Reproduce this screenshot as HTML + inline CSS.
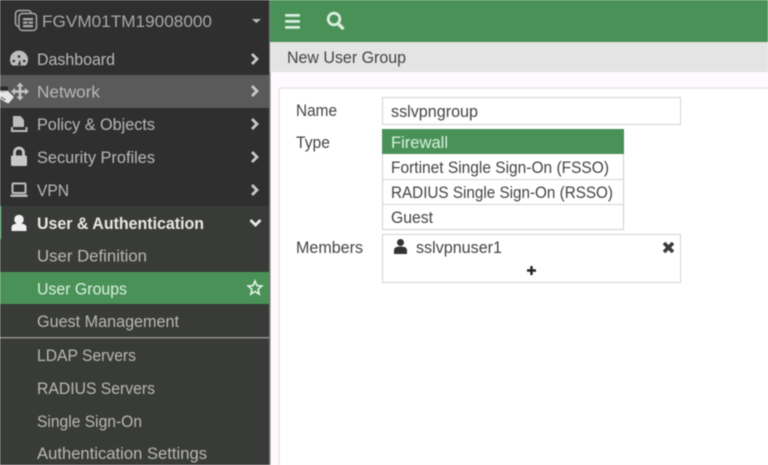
<!DOCTYPE html>
<html><head><meta charset="utf-8"><style>
html,body{margin:0;padding:0;width:768px;height:465px;overflow:hidden;background:#fdf9fd}
svg{display:block;filter:blur(.5px)}
text{font-family:"Liberation Sans",sans-serif;font-size:16.5px}
.s{fill:#b8b8b6}.d{fill:#444}
</style></head><body>
<svg width="768" height="465" viewBox="0 0 768 465" xmlns="http://www.w3.org/2000/svg">
<rect width="768" height="465" fill="#fdf9fd"/>
<!-- sidebar -->
<rect width="270" height="206" fill="#2f2f2f"/>
<rect y="206" width="270" height="259" fill="#393b39"/>
<rect y="75" width="269" height="33" fill="#5a5a5a"/>
<rect y="272" width="269" height="32" fill="#4a9158"/>
<rect y="337" width="269" height="1.5" fill="#8d8d8b"/>
<rect y="206" width="1.5" height="33" fill="#4a9158"/>
<rect x="269" width="1.5" height="465" fill="#777"/>
<!-- header -->
<rect x="270" width="498" height="42" fill="#4a9158"/>
<rect x="270" y="42" width="498" height="30" fill="#e4e4e4"/>
<!-- header icons -->
<g fill="#d8eedd"><rect x="285" y="14" width="15" height="2.8" rx="1"/><rect x="285" y="20" width="15" height="2.8" rx="1"/><rect x="285" y="26" width="15" height="2.8" rx="1"/></g>
<circle cx="334" cy="19" r="5.8" fill="none" stroke="#d8eedd" stroke-width="2.8"/>
<path d="M338 23.500l4.500 4.500" stroke="#d8eedd" stroke-width="3.400" stroke-linecap="round"/>
<!-- device -->
<g fill="none" stroke="#a8a8a8" stroke-width="1.500">
<rect x="15.500" y="10.500" width="16" height="16" rx="3.500"/>
<rect x="19" y="13.500" width="17.500" height="17" rx="3.500" fill="#2f2f2f"/>
</g>
<path d="M23 18h10v2.200h-10zM23 21.500h4.500v2.200h-4.500zM28.500 21.500h4.500v2.200h-4.500zM23 25h10v2.200h-10z" fill="#a8a8a8"/>
<text x="42" y="27" textLength="170" lengthAdjust="spacingAndGlyphs" style="fill:#a8a8a6">FGVM01TM19008000</text>
<path d="M252 19h9l-4.500 4z" fill="#bbb"/>
<!-- sidebar labels -->
<text x="37" y="65" textLength="78" lengthAdjust="spacingAndGlyphs" class="s">Dashboard</text>
<text x="37" y="97.500" textLength="63" lengthAdjust="spacingAndGlyphs" class="s">Network</text>
<text x="37" y="130" textLength="118" lengthAdjust="spacingAndGlyphs" class="s">Policy &amp; Objects</text>
<text x="37" y="163" textLength="118" lengthAdjust="spacingAndGlyphs" class="s">Security Profiles</text>
<text x="37" y="196" textLength="32" lengthAdjust="spacingAndGlyphs" class="s">VPN</text>
<text x="37" y="229" textLength="167" lengthAdjust="spacingAndGlyphs" style="fill:#e8e8e6;font-weight:bold">User &amp; Authentication</text>
<text x="37" y="261.500" textLength="110" lengthAdjust="spacingAndGlyphs" class="s">User Definition</text>
<text x="37" y="294.500" textLength="90" lengthAdjust="spacingAndGlyphs" style="fill:#d8f0dd">User Groups</text>
<text x="37" y="327" textLength="142" lengthAdjust="spacingAndGlyphs" class="s">Guest Management</text>
<text x="37" y="361" textLength="99" lengthAdjust="spacingAndGlyphs" class="s">LDAP Servers</text>
<text x="37" y="394" textLength="118" lengthAdjust="spacingAndGlyphs" class="s">RADIUS Servers</text>
<text x="37" y="427" textLength="105" lengthAdjust="spacingAndGlyphs" class="s">Single Sign-On</text>
<text x="37" y="459" textLength="170" lengthAdjust="spacingAndGlyphs" class="s">Authentication Settings</text>
<!-- chevrons -->
<g fill="none" stroke="#c8c8c6" stroke-width="2.800">
<path d="M252 54l5 5-5 5M252 86l5 5-5 5M252 119l5 5-5 5M252 152l5 5-5 5M252 185l5 5-5 5"/>
<path d="M250.500 220l5 5 5-5" stroke="#e8e8e6"/>
</g>
<!-- sidebar icons -->
<path d="M12.200 65.500A9 9 0 1 1 25.800 65.500z" fill="#bdbdbd"/>
<g fill="#2f2f2f"><circle cx="13.800" cy="61" r="1.300"/><circle cx="24.200" cy="61" r="1.300"/><circle cx="19" cy="56.500" r="1.300"/><path d="M17.800 65l2.200-5.500 .9 5.500z"/></g>
<path d="M13 91.500h14M20 84.500v14" stroke="#c4c4c2" stroke-width="2.600"/>
<path d="M20 82.500l3.600 4h-7.200zM20 100.500l3.600-4h-7.200zM11 91.500l4-3.600v7.200zM29 91.500l-4-3.600v7.200z" fill="#c4c4c2"/>
<path d="M0 92h5l3-1 6 6-5.500 6.500-3.500-1.500-5-3.500z" fill="#e6e6e6"/>
<path d="M0 86.500h8v4.500h-8z" fill="#2a2a2a"/><path d="M0 91.200h8" stroke="#ddd"/>
<path d="M1 97l4.500 3" stroke="#666" stroke-width="1.200"/>
<path d="M13 116h7.500l3.500 4v7h-11z" fill="#bdbdbd"/>
<path d="M12 127v4h14.500v-4" fill="none" stroke="#bdbdbd" stroke-width="2"/>
<path d="M14.500 156v-3.500a4.500 4.500 0 0 1 9 0v3.500" fill="none" stroke="#c8c8c6" stroke-width="2.800"/>
<rect x="11" y="155.500" width="16" height="10.500" rx="1.500" fill="#c8c8c6"/>
<rect x="12.500" y="183.500" width="13" height="9.500" rx="1" fill="none" stroke="#bdbdbd" stroke-width="2"/>
<rect x="10.500" y="194.500" width="17" height="2.400" fill="#bdbdbd"/>
<circle cx="19" cy="219.500" r="4.800" fill="#f0f0f0"/>
<path d="M11.500 231v-3.500c0-3 3-4 7.500-4s7.500 1 7.500 4v3.500z" fill="#f0f0f0"/>
<path d="M255 281l1.900 4.600 4.900.4-3.700 3.200 1.100 4.800-4.200-2.600-4.200 2.600 1.100-4.800-3.700-3.200 4.900-.4z" fill="none" stroke="#e4f2e7" stroke-width="1.600"/>
<!-- title -->
<text x="287" y="63" textLength="119" lengthAdjust="spacingAndGlyphs" class="d">New User Group</text>
<!-- card -->
<rect x="279" y="88" width="489" height="377" fill="#fff"/>
<path d="M279 465V90q0-2 2-2H768" fill="none" stroke="#e8e4e8" stroke-width="1.500"/>
<text x="296" y="116" textLength="41" lengthAdjust="spacingAndGlyphs" class="d">Name</text>
<text x="296" y="148" textLength="34" lengthAdjust="spacingAndGlyphs" class="d">Type</text>
<text x="296" y="253" textLength="67" lengthAdjust="spacingAndGlyphs" class="d">Members</text>
<rect x="382.500" y="97.500" width="298" height="27" fill="#fff" stroke="#d2d2d2"/>
<text x="391" y="117" textLength="87" lengthAdjust="spacingAndGlyphs" class="d">sslvpngroup</text>
<rect x="382.500" y="129.500" width="241" height="100" fill="#fff" stroke="#cfcfcf"/>
<rect x="382" y="129" width="242" height="25" fill="#4a9158"/>
<path d="M382 179.500h242M382 204.500h242" stroke="#d6d6d6"/>
<text x="391" y="148" textLength="57" lengthAdjust="spacingAndGlyphs" style="fill:#d8f0dd">Firewall</text>
<text x="391" y="173" textLength="218" lengthAdjust="spacingAndGlyphs" class="d">Fortinet Single Sign-On (FSSO)</text>
<text x="391" y="198" textLength="222" lengthAdjust="spacingAndGlyphs" class="d">RADIUS Single Sign-On (RSSO)</text>
<text x="391" y="223" textLength="42" lengthAdjust="spacingAndGlyphs" class="d">Guest</text>
<rect x="382.500" y="234.500" width="298" height="48" fill="#fff" stroke="#d2d2d2"/>
<circle cx="400.500" cy="242.500" r="3.500" fill="#333"/>
<path d="M394 254v-3.500c0-3 2.500-4 6.500-4s6.500 1 6.500 4v3.500z" fill="#333"/>
<text x="416" y="253" textLength="86" lengthAdjust="spacingAndGlyphs" class="d">sslvpnuser1</text>
<path d="M664 243l9 9M673 243l-9 9" stroke="#3a3a3a" stroke-width="3.600"/>
<path d="M527 270.500h9M531.500 266v9" stroke="#222" stroke-width="2.400"/>
</svg>
</body></html>
